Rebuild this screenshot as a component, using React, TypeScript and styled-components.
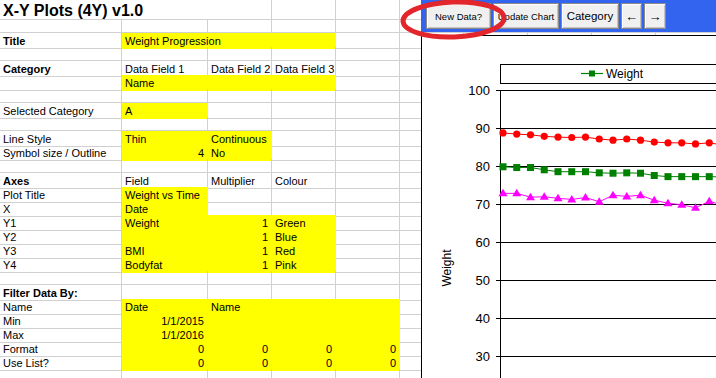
import React from 'react';
import styled, { createGlobalStyle } from 'styled-components';

const GlobalStyle = createGlobalStyle`
  html, body {
    margin: 0;
    padding: 0;
    background: #fff;
  }
  body {
    font-family: 'Liberation Sans', Arial, sans-serif;
  }
`;

const Page = styled.div`
  position: relative;
  width: 716px;
  height: 378px;
  overflow: hidden;
  background: #fff;
`;

const Sheet = styled.div`
  display: flex;
  flex-direction: column;
`;

const Row = styled.div<{ $tall?: boolean }>`
  display: grid;
  grid-template-columns: 122px 86px repeat(8, 64px);
  height: ${(p) => (p.$tall ? 19 : 14)}px;
  flex: none;
`;

const GRID = '#d0d0d0';
const YELLOW = '#ffff00';

const Cell = styled.div<{ $span: number; $fill?: boolean; $bold?: boolean; $right?: boolean; $title?: boolean }>`
  grid-column: span ${(p) => p.$span};
  box-sizing: border-box;
  height: 100%;
  border-right: 1px solid ${(p) => (p.$fill ? YELLOW : p.$title ? 'transparent' : GRID)};
  border-bottom: 1px solid ${(p) => (p.$fill ? YELLOW : GRID)};
  background: ${(p) => (p.$fill ? YELLOW : 'transparent')};
  padding: ${(p) => (p.$title ? '3px 3px 0 3px' : '1.5px 3px 0 3px')};
  font-size: ${(p) => (p.$title ? 16 : 11)}px;
  line-height: ${(p) => (p.$title ? 16 : 13)}px;
  font-weight: ${(p) => (p.$bold || p.$title ? 700 : 400)};
  text-align: ${(p) => (p.$right ? 'right' : 'left')};
  white-space: nowrap;
  color: #000;
`;

const ButtonBar = styled.div`
  position: absolute;
  left: 421px;
  top: 0;
  width: 300px;
  height: 32px;
  box-sizing: border-box;
  padding: 3px 0 0 5px;
  background: #3264f0;
  display: flex;
  align-items: flex-start;
  gap: 2px;
`;

const ToolButton = styled.button<{ $w: number; $size: number }>`
  width: ${(p) => p.$w}px;
  height: 26px;
  padding: 0;
  margin: 0;
  background: #f0f0f0;
  border: 1px solid #8a8a8a;
  box-shadow: inset 1px 1px 0 #fff, inset -1px -1px 0 #c4c4c4;
  font-family: 'Liberation Sans', Arial, sans-serif;
  font-size: ${(p) => p.$size}px;
  color: #000;
  white-space: nowrap;
  cursor: default;
`;

const ChartObject = styled.div`
  position: absolute;
  left: 421px;
  top: 35px;
  width: 320px;
  height: 360px;
  background: #fff;
  border-left: 1px solid #000;
  border-top: 1px solid #000;

  svg {
    display: block;
  }
`;

const Annotation = styled.svg`
  position: absolute;
  left: 398px;
  top: 0;
  pointer-events: none;
`;

type CellDef = { t?: string; span?: number; fill?: boolean; bold?: boolean; right?: boolean; title?: boolean };

const rows: { tall?: boolean; cells: CellDef[] }[] = [
  { tall: true, cells: [{ t: 'X-Y Plots (4Y) v1.0', span: 2, title: true }] },
  { cells: [] },
  { cells: [{ t: 'Title', bold: true }, { t: 'Weight Progression', span: 3, fill: true }] },
  { cells: [] },
  { cells: [{ t: 'Category', bold: true }, { t: 'Data Field 1' }, { t: 'Data Field 2' }, { t: 'Data Field 3' }] },
  { cells: [{}, { t: 'Name', span: 3, fill: true }] },
  { cells: [] },
  { cells: [{ t: 'Selected Category' }, { t: 'A', fill: true }] },
  { cells: [] },
  { cells: [{ t: 'Line Style' }, { t: 'Thin', fill: true }, { t: 'Continuous', fill: true }] },
  { cells: [{ t: 'Symbol size / Outline' }, { t: '4', fill: true, right: true }, { t: 'No', fill: true }] },
  { cells: [] },
  { cells: [{ t: 'Axes', bold: true }, { t: 'Field' }, { t: 'Multiplier' }, { t: 'Colour' }] },
  { cells: [{ t: 'Plot Title' }, { t: 'Weight vs Time', fill: true }] },
  { cells: [{ t: 'X' }, { t: 'Date', fill: true }] },
  { cells: [{ t: 'Y1' }, { t: 'Weight', fill: true }, { t: '1', fill: true, right: true }, { t: 'Green', fill: true }] },
  { cells: [{ t: 'Y2' }, { fill: true }, { t: '1', fill: true, right: true }, { t: 'Blue', fill: true }] },
  { cells: [{ t: 'Y3' }, { t: 'BMI', fill: true }, { t: '1', fill: true, right: true }, { t: 'Red', fill: true }] },
  { cells: [{ t: 'Y4' }, { t: 'Bodyfat', fill: true }, { t: '1', fill: true, right: true }, { t: 'Pink', fill: true }] },
  { cells: [] },
  { cells: [{ t: 'Filter Data By:', bold: true }] },
  { cells: [{ t: 'Name' }, { t: 'Date', fill: true }, { t: 'Name', fill: true }, { fill: true }, { fill: true }] },
  { cells: [{ t: 'Min' }, { t: '1/1/2015', fill: true, right: true }, { fill: true }, { fill: true }, { fill: true }] },
  { cells: [{ t: 'Max' }, { t: '1/1/2016', fill: true, right: true }, { fill: true }, { fill: true }, { fill: true }] },
  {
    cells: [
      { t: 'Format' },
      { t: '0', fill: true, right: true },
      { t: '0', fill: true, right: true },
      { t: '0', fill: true, right: true },
      { t: '0', fill: true, right: true },
    ],
  },
  {
    cells: [
      { t: 'Use List?' },
      { t: '0', fill: true, right: true },
      { t: '0', fill: true, right: true },
      { t: '0', fill: true, right: true },
      { t: '0', fill: true, right: true },
    ],
  },
  { cells: [] },
];

const COLS = 10;

const red = [88.7, 88.4, 88.2, 87.8, 87.6, 87.5, 87.6, 87.1, 86.8, 87.1, 86.8, 86.3, 86.1, 86.1, 85.8, 86.1, 85.5];
const green = [79.8, 79.6, 79.6, 79.0, 78.5, 78.5, 78.5, 78.2, 78.1, 78.2, 78.1, 77.5, 77.2, 77.2, 77.2, 77.2, 77.1];
const pink = [72.8, 72.8, 71.8, 71.9, 71.5, 71.2, 71.7, 70.6, 72.3, 72.0, 72.3, 71.0, 70.2, 69.8, 69.0, 70.7, 69.7];

// only the labels that fit inside the window; the 20 line sits below it
const TICKS = [100, 90, 80, 70, 60, 50, 40, 30];
const yOf = (v: number) => 54 + (100 - v) * 3.8;
const xOf = (i: number) => 81 + i * 13.75;
const pts = (d: number[]) => d.map((v, i) => `${xOf(i)},${yOf(v)}`).join(' ');

const Chart = () => (
  <svg width={320} height={360} fontFamily="'Liberation Sans', Arial, sans-serif">
    {/* legend */}
    <rect x={78.5} y={28.5} width={300} height={19} fill="#fff" stroke="#000" />
    <line x1={159} x2={181} y1={37.5} y2={37.5} stroke="#008000" strokeWidth={1.2} />
    <rect x={167} y={34.5} width={6} height={6} fill="#008000" />
    <text x={184} y={42} fontSize={12}>
      Weight
    </text>

    {/* axis + gridlines */}
    {TICKS.map((v) => (
      <g key={v}>
        <line x1={74} x2={320} y1={yOf(v) + 0.5} y2={yOf(v) + 0.5} stroke="#000" shapeRendering="crispEdges" />
        <text x={68} y={yOf(v) + 4.5} fontSize={13} textAnchor="end">
          {v}
        </text>
      </g>
    ))}
    <line x1={78.5} x2={78.5} y1={54} y2={360} stroke="#000" shapeRendering="crispEdges" />
    <text x={29} y={232} fontSize={12} textAnchor="middle" transform="rotate(-90 29 232)">
      Weight
    </text>

    {/* series */}
    <polyline points={pts(red)} fill="none" stroke="#ff0000" strokeWidth={1} />
    {red.map((v, i) => (
      <circle key={i} cx={xOf(i)} cy={yOf(v)} r={3.6} fill="#ff0000" />
    ))}
    <polyline points={pts(green)} fill="none" stroke="#008000" strokeWidth={1} />
    {green.map((v, i) => (
      <rect key={i} x={xOf(i) - 3.5} y={yOf(v) - 3.5} width={7} height={7} fill="#008000" />
    ))}
    <polyline points={pts(pink)} fill="none" stroke="#ff00ff" strokeWidth={1} />
    {pink.map((v, i) => {
      const x = xOf(i);
      const y = yOf(v);
      return <polygon key={i} points={`${x},${y - 4.5} ${x - 4.5},${y + 3} ${x + 4.5},${y + 3}`} fill="#ff00ff" />;
    })}
  </svg>
);

const App = () => {
  return (
    <Page>
      <GlobalStyle />
      <Sheet>
        {rows.map((row, ri) => {
          const used = row.cells.reduce((n, c) => n + (c.span || 1), 0);
          const blanks = Array.from({ length: Math.max(0, COLS - used) });
          return (
            <Row key={ri} $tall={row.tall}>
              {row.cells.map((c, ci) => (
                <Cell
                  key={ci}
                  $span={c.span || 1}
                  $fill={c.fill}
                  $bold={c.bold}
                  $right={c.right}
                  $title={c.title}
                >
                  {c.t}
                </Cell>
              ))}
              {blanks.map((_, bi) => (
                <Cell key={'b' + bi} $span={1} />
              ))}
            </Row>
          );
        })}
      </Sheet>

      <ChartObject>
        <Chart />
      </ChartObject>

      <ButtonBar>
        <ToolButton $w={65} $size={9.5}>
          New Data?
        </ToolButton>
        <ToolButton $w={66} $size={9.5}>
          Update Chart
        </ToolButton>
        <ToolButton $w={58} $size={11.5}>
          Category
        </ToolButton>
        <ToolButton $w={21} $size={13}>
          ←
        </ToolButton>
        <ToolButton $w={22} $size={13}>
          →
        </ToolButton>
      </ButtonBar>

      <Annotation width={115} height={44}>
        <ellipse
          cx={55.5}
          cy={19.5}
          rx={50.5}
          ry={17.5}
          fill="none"
          stroke="#e3262b"
          strokeWidth={5}
          transform="rotate(-2 55.5 19.5)"
        />
      </Annotation>
    </Page>
  );
};

export default App;
